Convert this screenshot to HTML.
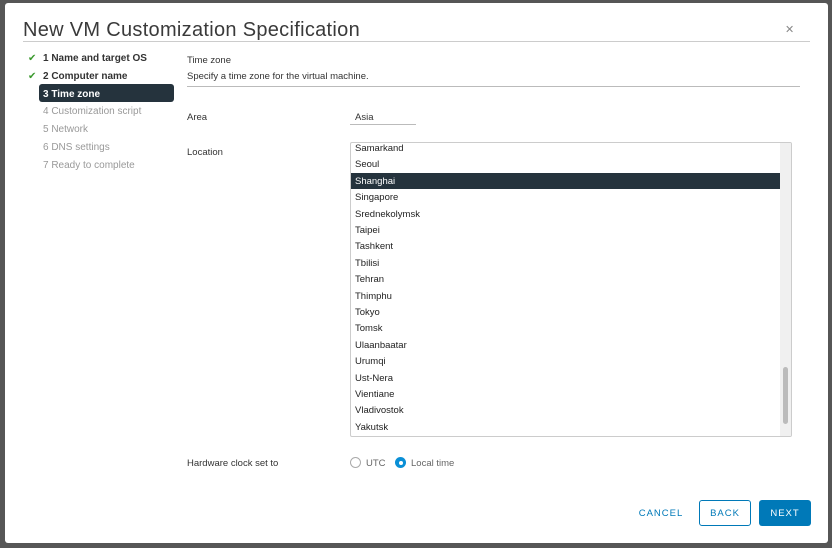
<!DOCTYPE html>
<html><head><meta charset="utf-8"><style>
*{margin:0;padding:0;box-sizing:border-box}
body{width:832px;height:548px;background:#565656;font-family:"Liberation Sans",sans-serif;position:relative;overflow:hidden;color:#333}
.modal{position:absolute;left:5px;top:3px;width:823px;height:540px;background:#fff;border-radius:3px}
.t{position:absolute;white-space:nowrap}
.title{left:18px;top:16px;font-size:20px;color:#3a3a3a;font-weight:normal;letter-spacing:.3px}
.hl{position:absolute;left:18px;top:38px;width:787px;height:1px;background:#ccc}
.close{left:780px;top:20px;font-size:11px;color:#888}
.nav{font-size:10px;font-weight:bold;color:#333}
.nav.g{color:#999;font-weight:normal}
.chk{color:#3c9a2f;font-size:10px}
.sel{position:absolute;left:34px;top:81px;width:135px;height:18px;background:#25333d;border-radius:3px}
.f{font-size:9.5px;color:#333}
.list{position:absolute;left:345px;top:139px;width:442px;height:295px;border:1px solid #ccc;border-radius:2px;overflow:hidden}
.row{position:absolute;left:0;width:430px;height:16.4px;font-size:9.5px;padding-left:4px;line-height:17px;color:#222}
.row.s{background:#25333d;color:#fff}
.track{position:absolute;right:0;top:0;width:11px;height:100%;background:#f0f0f0}
.thumb{position:absolute;left:3px;top:224px;width:5px;height:57px;background:#bbb;border-radius:3px}
.btn{position:absolute;top:497px;height:26px;font-size:9.5px;letter-spacing:1px;text-align:center;line-height:28px;border-radius:3px}
</style></head><body>
<div class="modal">
<div class="t title">New VM Customization Specification</div>
<div class="t close">✕</div>
<div class="hl"></div>
<div class="sel"></div>
<div class="t chk" style="left:23px;top:50px">✔</div>
<div class="t nav" style="left:38px;top:50px">1 Name and target OS</div>
<div class="t chk" style="left:23px;top:68px">✔</div>
<div class="t nav" style="left:38px;top:68px">2 Computer name</div>
<div class="t nav" style="left:38px;top:86px;color:#fff">3 Time zone</div>
<div class="t nav g" style="left:38px;top:103px">4 Customization script</div>
<div class="t nav g" style="left:38px;top:121px">5 Network</div>
<div class="t nav g" style="left:38px;top:139px">6 DNS settings</div>
<div class="t nav g" style="left:38px;top:157px">7 Ready to complete</div>
<div class="t f" style="left:182px;top:52px">Time zone</div>
<div class="t f" style="left:182px;top:68px">Specify a time zone for the virtual machine.</div>
<div style="position:absolute;left:182px;top:83px;width:613px;height:1px;background:#bbb"></div>
<div class="t f" style="left:182px;top:109px">Area</div>
<div class="t f" style="left:350px;top:109px">Asia</div>
<div style="position:absolute;left:345px;top:121px;width:66px;height:1px;background:#bbb"></div>
<div class="t f" style="left:182px;top:144px">Location</div>
<div class="list">
<div class="row" style="top:-3px">Samarkand</div>
<div class="row" style="top:13.4px">Seoul</div>
<div class="row s" style="top:29.8px">Shanghai</div>
<div class="row" style="top:46.2px">Singapore</div>
<div class="row" style="top:62.6px">Srednekolymsk</div>
<div class="row" style="top:79px">Taipei</div>
<div class="row" style="top:95.4px">Tashkent</div>
<div class="row" style="top:111.8px">Tbilisi</div>
<div class="row" style="top:128.2px">Tehran</div>
<div class="row" style="top:144.6px">Thimphu</div>
<div class="row" style="top:161px">Tokyo</div>
<div class="row" style="top:177.4px">Tomsk</div>
<div class="row" style="top:193.8px">Ulaanbaatar</div>
<div class="row" style="top:210.2px">Urumqi</div>
<div class="row" style="top:226.6px">Ust-Nera</div>
<div class="row" style="top:243px">Vientiane</div>
<div class="row" style="top:259.4px">Vladivostok</div>
<div class="row" style="top:275.8px">Yakutsk</div>
<div class="track"><div class="thumb"></div></div>
</div>
<div class="t f" style="left:182px;top:455px">Hardware clock set to</div>
<div style="position:absolute;left:345px;top:454px;width:11px;height:11px;border:1px solid #aaa;border-radius:50%"></div>
<div class="t f" style="left:361px;top:455px;color:#666">UTC</div>
<div style="position:absolute;left:390px;top:454px;width:11px;height:11px;background:#0a8fd6;border-radius:50%"><div style="position:absolute;left:3.5px;top:3.5px;width:4px;height:4px;background:#fff;border-radius:50%"></div></div>
<div class="t f" style="left:406px;top:455px;color:#666">Local time</div>
<div class="btn" style="left:628px;width:56px;color:#0079b8">CANCEL</div>
<div class="btn" style="left:694px;width:52px;border:1px solid #0079b8;color:#0079b8;line-height:26px">BACK</div>
<div class="btn" style="left:754px;width:52px;background:#0079b8;color:#fff">NEXT</div>
</div>
</body></html>
